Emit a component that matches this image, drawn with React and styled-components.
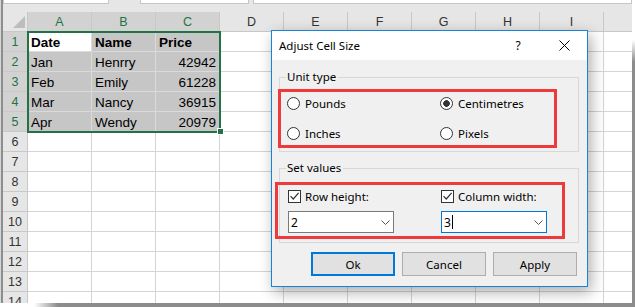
import React from "react";
import styled, { createGlobalStyle } from "styled-components";

const GlobalStyle = createGlobalStyle`
  html, body { margin: 0; padding: 0; background: #fff; }
  body { font-family: "Liberation Sans", Arial, sans-serif; }
`;

const Frame = styled.div`
  position: relative;
  width: 635px;
  height: 307px;
  overflow: hidden;
  background: #fff;
  &::before {
    content: "";
    position: absolute;
    left: 632px;
    top: 40px;
    width: 3px;
    bottom: 0;
    background: linear-gradient(to bottom, rgba(140,140,140,0), #8c8c8c 22px);
  }
  &::after {
    content: "";
    position: absolute;
    left: 34px;
    top: 303px;
    height: 4px;
    right: 0;
    background: linear-gradient(to right, rgba(140,140,140,0), #8c8c8c 24px);
  }
`;

const Shot = styled.div`
  width: 632px;
  height: 303px;
  overflow: hidden;
  display: flex;
`;

const LeftEdge = styled.div`
  flex: 0 0 3px;
  background: linear-gradient(to right, #d6d6d6 0 1px, #8e8e8e 1px 3px);
`;

const Main = styled.div`
  flex: 1;
  min-width: 0;
  display: flex;
  flex-direction: column;
`;

const TopStrip = styled.div`
  flex: 0 0 12px;
  background: #e6e6e6;
  display: flex;
  align-items: flex-start;
`;

const BarBox = styled.div`
  box-sizing: border-box;
  height: 4px;
  width: ${(p) => p.$w}px;
  margin-left: ${(p) => p.$ml || 0}px;
  background: #fff;
  border: 1px solid #c6c6c6;
  border-top: none;
`;

const Sheet = styled.div`
  position: relative;
  display: grid;
  grid-template-columns: 25px repeat(10, 64px);
  grid-auto-rows: 20px;
`;

const Corner = styled.div`
  box-sizing: border-box;
  background: #e6e6e6;
  border-right: 1px solid #c8c8c8;
  border-bottom: 1px solid #c8c8c8;
  display: flex;
  align-items: flex-end;
  justify-content: flex-end;
  padding: 0 2px 3px 0;
`;

const ColHead = styled.div`
  box-sizing: border-box;
  background: ${(p) => (p.$sel ? "#d2d2d2" : "#e6e6e6")};
  color: ${(p) => (p.$sel ? "#217346" : "#333")};
  border-right: 1px solid #c8c8c8;
  border-bottom: 1px solid #c8c8c8;
  font-size: 12.5px;
  display: flex;
  align-items: center;
  justify-content: center;
`;

const RowHead = styled(ColHead)``;

const Cell = styled.div`
  box-sizing: border-box;
  background: ${(p) => (p.$sel && !p.$active ? "#c6c6c6" : "#fff")};
  border-right: 1px solid ${(p) => (p.$sel ? "#dadada" : "#d4d4d4")};
  border-bottom: 1px solid ${(p) => (p.$sel ? "#dadada" : "#d4d4d4")};
  font-size: 13.5px;
  font-weight: ${(p) => (p.$bold ? 700 : 400)};
  color: #000;
  line-height: 16px;
  padding: 3px 3px 0 3px;
  text-align: ${(p) => (p.$num ? "right" : "left")};
  white-space: nowrap;
  overflow: hidden;
`;

const Selection = styled.div`
  position: absolute;
  left: 24px;
  top: 19px;
  width: 194px;
  height: 102px;
  box-sizing: border-box;
  border: 2px solid #217346;
  pointer-events: none;
`;

const FillHandle = styled.div`
  position: absolute;
  left: 215px;
  top: 117px;
  width: 5px;
  height: 5px;
  background: #217346;
  box-shadow: 0 0 0 1px #fff;
`;

/* Dialog */
const Dialog = styled.div`
  position: absolute;
  left: 271px;
  top: 30px;
  width: 317px;
  height: 257px;
  box-sizing: border-box;
  border: 1px solid #1883d7;
  background: #f0f0f0;
  box-shadow: 3px 5px 14px rgba(0, 0, 0, 0.33);
  display: flex;
  flex-direction: column;
  font-family: "Noto Sans", "Open Sans", sans-serif;
  font-size: 11.5px;
  color: #000;
`;

const TitleBar = styled.div`
  flex: 0 0 29px;
  background: #fff;
  display: flex;
  align-items: center;
  padding-left: 7px;
`;

const Title = styled.div`
  flex: 1;
  font-size: 11.5px;
`;

const TitleButton = styled.div`
  width: 46px;
  height: 29px;
  display: flex;
  align-items: center;
  justify-content: center;
  font-size: 12px;
`;

const Body = styled.div`
  flex: 1;
  padding: 9px 8px 0 7px;
  display: flex;
  flex-direction: column;
`;

const Group = styled.fieldset`
  margin: ${(p) => p.$mt || 0}px 0 0 0;
  padding: ${(p) => p.$pt}px 0 3px 0;
  border: 1px solid #d8d8d8;
  min-width: 0;
`;

const Legend = styled.legend`
  margin-left: 6px;
  padding: 0 2px 0 1px;
  font-size: 11.5px;
  line-height: 16px;
`;

const RedBox = styled.div`
  box-sizing: border-box;
  margin-left: ${(p) => p.$ml}px;
  width: ${(p) => p.$w}px;
  border: 3px solid #ef3a3b;
`;

const RadioGrid = styled(RedBox)`
  display: grid;
  grid-template-columns: 153px auto;
  grid-template-rows: 22px 22px;
  row-gap: 8px;
  padding: 0 0 1px 6px;
`;

const Option = styled.label`
  display: flex;
  align-items: center;
  gap: 5px;
  white-space: nowrap;
`;

const RadioDot = styled.span`
  box-sizing: border-box;
  width: 13px;
  height: 13px;
  border-radius: 50%;
  border: 1px solid #333;
  background: ${(p) =>
    p.$checked
      ? "radial-gradient(circle, #333 0 3px, #fff 3.6px)"
      : "#fff"};
`;

const ValuesGrid = styled(RedBox)`
  display: grid;
  grid-template-columns: 153px 107px;
  padding: 4px 0 3px 10px;
`;

const Field = styled.div`
  display: flex;
  flex-direction: column;
  gap: 8px;
`;

const CheckRow = styled.label`
  height: 14px;
  display: flex;
  align-items: center;
  gap: 4px;
  white-space: nowrap;
`;

const CheckBox = styled.span`
  box-sizing: border-box;
  width: 13px;
  height: 13px;
  border: 1px solid #333;
  background: #fff;
  display: flex;
  svg { display: block; }
`;

const Combo = styled.div`
  box-sizing: border-box;
  width: 106px;
  height: 22px;
  border: 1px solid ${(p) => (p.$focus ? "#0078d7" : "#7a7a7a")};
  background: #fff;
  display: flex;
  align-items: center;
  padding-left: 2px;
  font-size: 12px;
`;

const ComboText = styled.span`
  flex: 1;
  display: flex;
  align-items: center;
`;

const Caret = styled.span`
  width: 1px;
  height: 14px;
  background: #000;
  margin-left: 1px;
`;

const Chevron = styled.span`
  width: 16px;
  display: flex;
  justify-content: center;
  svg { display: block; }
`;

const Buttons = styled.div`
  margin-top: 9px;
  display: flex;
  justify-content: flex-end;
  gap: 7px;
  padding-right: 2px;
`;

const Button = styled.button`
  box-sizing: border-box;
  width: 84px;
  height: 24px;
  margin: 0;
  background: #e1e1e1;
  border: ${(p) => (p.$default ? "2px solid #0078d7" : "1px solid #adadad")};
  font-family: "Noto Sans", "Open Sans", sans-serif;
  font-size: 11.5px;
  color: #000;
  padding: 0;
`;

const cols = ["A", "B", "C", "D", "E", "F", "G", "H", "I", ""];
const data = [
  ["Date", "Name", "Price"],
  ["Jan", "Henrry", "42942"],
  ["Feb", "Emily", "61228"],
  ["Mar", "Nancy", "36915"],
  ["Apr", "Wendy", "20979"],
];
const rows = Array.from({ length: 14 }, (_, i) => i + 1);

const Check = () => (
  <CheckBox>
    <svg width="11" height="11" viewBox="0 0 11 11">
      <path d="M1.5 5.2 L4.3 8 L9.6 1.8" fill="none" stroke="#333" strokeWidth="1.2" />
    </svg>
  </CheckBox>
);

const Down = () => (
  <Chevron>
    <svg width="9" height="5" viewBox="0 0 9 5">
      <path d="M0.5 0.5 L4.5 4.5 L8.5 0.5" fill="none" stroke="#555" strokeWidth="1" />
    </svg>
  </Chevron>
);

export default function App() {
  return (
    <>
      <GlobalStyle />
      <Frame>
        <Shot>
          <LeftEdge />
          <Main>
            <TopStrip>
              <BarBox $w={106} />
              <BarBox $w={109} $ml={31} />
              <BarBox $w={380} $ml={4} />
            </TopStrip>
            <Sheet>
              <Corner>
                <svg width="12" height="12" viewBox="0 0 12 12">
                  <path d="M12 0 L12 12 L0 12 Z" fill="#bdbdbd" />
                </svg>
              </Corner>
              {cols.map((c, i) => (
                <ColHead key={i} $sel={i < 3}>
                  {c}
                </ColHead>
              ))}
              {rows.map((r) => (
                <React.Fragment key={r}>
                  <RowHead $sel={r <= 5}>{r}</RowHead>
                  {cols.map((c, ci) => {
                    const v = data[r - 1] ? data[r - 1][ci] : undefined;
                    return (
                      <Cell
                        key={ci}
                        $sel={r <= 5 && ci < 3}
                        $active={r === 1 && ci === 0}
                        $bold={r === 1}
                        $num={ci === 2 && r > 1}
                      >
                        {v}
                      </Cell>
                    );
                  })}
                </React.Fragment>
              ))}
              <Selection />
              <FillHandle />
            </Sheet>
          </Main>
        </Shot>

        <Dialog>
          <TitleBar>
            <Title>Adjust Cell Size</Title>
            <TitleButton>?</TitleButton>
            <TitleButton>
              <svg width="11" height="11" viewBox="0 0 11 11">
                <path d="M0.5 0.5 L10.5 10.5 M10.5 0.5 L0.5 10.5" stroke="#000" strokeWidth="1" />
              </svg>
            </TitleButton>
          </TitleBar>
          <Body>
            <Group $pt={4}>
              <Legend>Unit type</Legend>
              <RadioGrid $ml={-2} $w={279}>
                <Option><RadioDot />Pounds</Option>
                <Option><RadioDot $checked />Centimetres</Option>
                <Option><RadioDot />Inches</Option>
                <Option><RadioDot />Pixels</Option>
              </RadioGrid>
            </Group>
            <Group $pt={6} $mt={8}>
              <Legend>Set values</Legend>
              <ValuesGrid $ml={-5} $w={290}>
                <Field>
                  <CheckRow><Check />Row height:</CheckRow>
                  <Combo>
                    <ComboText>2</ComboText>
                    <Down />
                  </Combo>
                </Field>
                <Field>
                  <CheckRow><Check />Column width:</CheckRow>
                  <Combo $focus>
                    <ComboText>3<Caret /></ComboText>
                    <Down />
                  </Combo>
                </Field>
              </ValuesGrid>
            </Group>
            <Buttons>
              <Button $default>Ok</Button>
              <Button>Cancel</Button>
              <Button>Apply</Button>
            </Buttons>
          </Body>
        </Dialog>
      </Frame>
    </>
  );
}
